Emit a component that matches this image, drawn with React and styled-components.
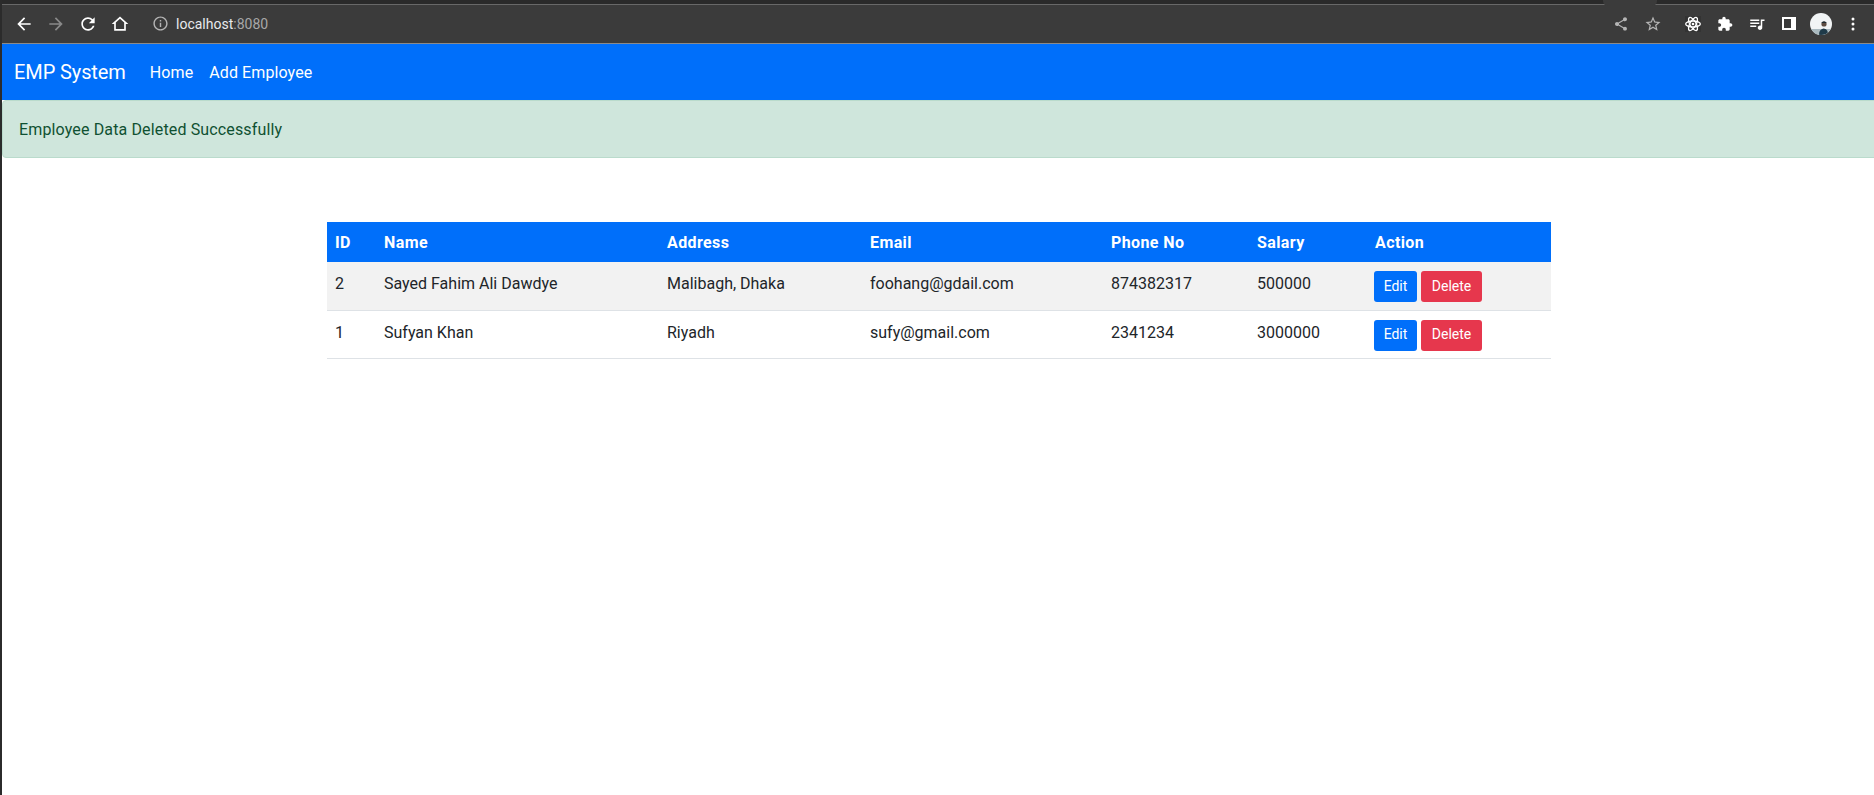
import React from 'react'
import styled, { createGlobalStyle } from 'styled-components'

const employees = [
  {
    id: 2,
    name: 'Sayed Fahim Ali Dawdye',
    address: 'Malibagh, Dhaka',
    email: 'foohang@gdail.com',
    phone: '874382317',
    salary: '500000'
  },
  {
    id: 1,
    name: 'Sufyan Khan',
    address: 'Riyadh',
    email: 'sufy@gmail.com',
    phone: '2341234',
    salary: '3000000'
  }
]

const columns = [
  { label: 'ID', width: 49 },
  { label: 'Name', width: 283 },
  { label: 'Address', width: 203 },
  { label: 'Email', width: 241 },
  { label: 'Phone No', width: 146 },
  { label: 'Salary', width: 118 },
  { label: 'Action', width: 184 }
]

const icons = {
  back: 'M20 11H7.83l5.59-5.59L12 4l-8 8 8 8 1.41-1.41L7.83 13H20v-2z',
  forward: 'M12 4l-1.41 1.41L16.17 11H4v2h12.17l-5.58 5.59L12 20l8-8z',
  reload:
    'M17.65 6.35C16.2 4.9 14.21 4 12 4c-4.42 0-7.99 3.58-7.99 8s3.57 8 7.99 8c3.73 0 6.84-2.55 7.73-6h-2.08c-.82 2.33-3.04 4-5.65 4-3.31 0-6-2.69-6-6s2.69-6 6-6c1.66 0 3.14.69 4.22 1.78L13 11h7V4l-2.35 2.35z',
  home: 'M12 5.69l5 4.5V18H7v-7.81l5-4.5M12 3L2 12h3v8h14v-8h3L12 3z',
  info: 'M11 7h2v2h-2zm0 4h2v6h-2zm1-9C6.48 2 2 6.48 2 12s4.48 10 10 10 10-4.48 10-10S17.52 2 12 2zm0 18c-4.41 0-8-3.59-8-8s3.59-8 8-8 8 3.59 8 8-3.59 8-8 8z',
  share:
    'M18 16.08c-.76 0-1.44.3-1.96.77L8.91 12.7c.05-.23.09-.46.09-.7s-.04-.47-.09-.7l7.05-4.11c.54.5 1.25.81 2.04.81 1.66 0 3-1.34 3-3s-1.34-3-3-3-3 1.34-3 3c0 .24.04.47.09.7L8.04 9.81C7.5 9.31 6.79 9 6 9c-1.66 0-3 1.34-3 3s1.34 3 3 3c.79 0 1.5-.31 2.04-.81l7.12 4.16c-.05.21-.08.43-.08.65 0 1.61 1.31 2.92 2.92 2.92s2.92-1.31 2.92-2.92-1.31-2.92-2.92-2.92z',
  star: 'M22 9.24l-7.19-.62L12 2 9.19 8.63 2 9.24l5.46 4.73L5.82 21 12 17.27 18.18 21l-1.63-7.03L22 9.24zM12 15.4l-3.76 2.27 1-4.28-3.32-2.88 4.38-.38L12 6.1l1.71 4.04 4.38.38-3.32 2.88 1 4.28L12 15.4z',
  extension:
    'M20.5 11H19V7c0-1.1-.9-2-2-2h-4V3.5C13 2.12 11.88 1 10.5 1S8 2.12 8 3.5V5H4c-1.1 0-1.99.9-1.99 2v3.8H3.5c1.49 0 2.7 1.21 2.7 2.7s-1.21 2.7-2.7 2.7H2V20c0 1.1.9 2 2 2h3.8v-1.5c0-1.49 1.21-2.7 2.7-2.7 1.49 0 2.7 1.21 2.7 2.7V22H17c1.1 0 2-.9 2-2v-4h1.5c1.38 0 2.5-1.12 2.5-2.5S21.88 11 20.5 11z',
  queue:
    'M15 6H3v2h12V6zm0 4H3v2h12v-2zM3 16h8v-2H3v2zM17 6v8.18c-.31-.11-.65-.18-1-.18-1.66 0-3 1.34-3 3s1.34 3 3 3 3-1.34 3-3V8h3V6h-5z'
}

const GlobalStyle = createGlobalStyle`
  html, body {
    margin: 0;
    background: #fff;
  }
  body {
    font-family: Roboto, 'Noto Sans', sans-serif;
    font-size: 16px;
    color: #212529;
    overflow: hidden;
  }
`

const Page = styled.div`
  width: 1874px;
  height: 795px;
  overflow: hidden;
  display: flex;
  flex-direction: column;
  background: #fff;
  border-left: 2px solid #2b2b2b;
  box-sizing: border-box;
`

const Chrome = styled.div`
  position: relative;
  height: 44px;
  flex: none;
  box-sizing: border-box;
  margin-left: -2px;
  background: #3b3b3b;
  border-top: 4px solid #2a2a2a;
  border-bottom: 1px solid #8a8a8a;
  box-shadow: inset 0 1px 0 #686868;
  display: flex;
  align-items: center;
  padding: 0 5px 0 8px;
  color: #fff;
`

const ActiveTab = styled.div`
  position: absolute;
  top: -4px;
  left: 1603px;
  width: 54px;
  height: 6px;
  background: #3b3b3b;
  border-radius: 0 0 5px 5px;
`

const Slot = styled.div`
  width: 32px;
  height: 32px;
  flex: none;
  display: flex;
  justify-content: center;
  align-items: center;
  color: ${p => p.$color || '#fff'};
`

const AtomSlot = styled(Slot)`
  margin-left: 8px;
`

const AtomBox = styled.div`
  width: 16px;
  height: 16px;
  display: flex;
  background: #333;
`

const InfoSlot = styled(Slot)`
  margin-left: 8px;
`

const AddressText = styled.div`
  flex: 1;
  font-size: 14px;
  color: #e8eaed;
`

const Port = styled.span`
  color: #a8a8a8;
`

const SidePanelIcon = styled.div`
  width: 14px;
  height: 13px;
  box-sizing: border-box;
  border: 2px solid #fff;
  border-right-width: 5px;
  background: #3b3b3b;
`

const Navbar = styled.nav`
  height: 56px;
  flex: none;
  background: #006ffa;
  display: flex;
  align-items: center;
  padding: 0 12px;
`

const Brand = styled.a`
  color: #fff;
  font-size: 20px;
  letter-spacing: -0.1px;
  margin-right: 16px;
  text-decoration: none;
`

const NavLink = styled.a`
  color: #fff;
  padding: 0 8px;
  letter-spacing: 0.1px;
  text-decoration: none;
`

const Alert = styled.div`
  height: 58px;
  flex: none;
  box-sizing: border-box;
  margin-right: -10px;
  background: #cfe6dc;
  border: 1px solid #badbcc;
  border-radius: 4px;
  color: #0f5132;
  padding: 0 16px;
  letter-spacing: 0.14px;
  display: flex;
  align-items: center;
`

const Container = styled.div`
  width: 1224px;
  margin: 64px 0 0 325px;
`

const Table = styled.table`
  width: 100%;
  table-layout: fixed;
  border-collapse: collapse;
`

const HeadCell = styled.th`
  background: #006ffa;
  color: #fff;
  font-weight: 700;
  letter-spacing: 0.4px;
  text-align: left;
  height: 40px;
  padding: 0 8px;
`

const Row = styled.tr`
  background: ${p => (p.$striped ? '#f2f2f2' : '#fff')};
  border-bottom: 1px solid #dee2e6;
`

const Cell = styled.td`
  height: 48px;
  box-sizing: border-box;
  padding: 10px 8px 0;
  line-height: 24px;
  vertical-align: top;
`

const Actions = styled.div`
  display: flex;
  gap: 4px;
  margin: -1px 0 0 -1px;
`

const ActionButton = styled.button`
  height: 31px;
  width: ${p => (p.$danger ? 61 : 43)}px;
  padding: 0 0 2px;
  border: none;
  border-radius: 3px;
  font-family: inherit;
  font-size: 14px;
  color: #fff;
  background: ${p => (p.$danger ? '#e6374d' : '#006ffa')};
`

const Icon = ({ d, size = 20 }) => (
  <svg width={size} height={size} viewBox="0 0 24 24" fill="currentColor">
    <path d={d} />
  </svg>
)

const AtomIcon = () => (
  <svg width="16" height="16" viewBox="0 0 24 24" fill="none" stroke="#fff" strokeWidth="2">
    <ellipse cx="12" cy="12" rx="11" ry="4.5" />
    <ellipse cx="12" cy="12" rx="11" ry="4.5" transform="rotate(60 12 12)" />
    <ellipse cx="12" cy="12" rx="11" ry="4.5" transform="rotate(120 12 12)" />
    <circle cx="12" cy="12" r="2" fill="#fff" stroke="none" />
  </svg>
)

const DotsIcon = () => (
  <svg width="16" height="16" viewBox="0 0 16 16" fill="#fff">
    <circle cx="8" cy="3" r="1.5" />
    <circle cx="8" cy="8" r="1.5" />
    <circle cx="8" cy="13" r="1.5" />
  </svg>
)

const AvatarIcon = () => (
  <svg width="22" height="22" viewBox="0 0 22 22">
    <defs>
      <clipPath id="avatar-clip">
        <circle cx="11" cy="11" r="11" />
      </clipPath>
    </defs>
    <g clipPath="url(#avatar-clip)">
      <rect width="22" height="22" fill="#f1f4f5" />
      <rect y="16" width="22" height="6" fill="#a9b9bf" />
      <path d="M9 22c0-4 1.500-6 4.500-6.500 3 .5 4.500 2 4.500 6.500z" fill="#1f3a49" />
      <circle cx="14" cy="11" r="2.600" fill="#5d4c42" />
      <path d="M11.500 10c0-2 5-2 5 0z" fill="#1d2a30" />
    </g>
  </svg>
)

export default function App() {
  return (
    <Page>
      <GlobalStyle />
      <Chrome>
        <ActiveTab />
        <Slot>
          <Icon d={icons.back} />
        </Slot>
        <Slot $color="#8a8a8a">
          <Icon d={icons.forward} />
        </Slot>
        <Slot>
          <Icon d={icons.reload} />
        </Slot>
        <Slot>
          <Icon d={icons.home} />
        </Slot>
        <InfoSlot $color="#b5b5b5">
          <Icon d={icons.info} size={17} />
        </InfoSlot>
        <AddressText>
          localhost<Port>:8080</Port>
        </AddressText>
        <Slot $color="#b5b5b5">
          <Icon d={icons.share} size={16} />
        </Slot>
        <Slot $color="#b5b5b5">
          <Icon d={icons.star} size={18} />
        </Slot>
        <AtomSlot>
          <AtomBox>
            <AtomIcon />
          </AtomBox>
        </AtomSlot>
        <Slot>
          <Icon d={icons.extension} size={16} />
        </Slot>
        <Slot>
          <Icon d={icons.queue} size={18} />
        </Slot>
        <Slot>
          <SidePanelIcon />
        </Slot>
        <Slot>
          <AvatarIcon />
        </Slot>
        <Slot>
          <DotsIcon />
        </Slot>
      </Chrome>
      <Navbar>
        <Brand>EMP System</Brand>
        <NavLink>Home</NavLink>
        <NavLink>Add Employee</NavLink>
      </Navbar>
      <Alert>Employee Data Deleted Successfully</Alert>
      <Container>
        <Table>
          <colgroup>
            {columns.map(col => (
              <col key={col.label} width={col.width} />
            ))}
          </colgroup>
          <thead>
            <tr>
              {columns.map(col => (
                <HeadCell key={col.label}>{col.label}</HeadCell>
              ))}
            </tr>
          </thead>
          <tbody>
            {employees.map((emp, i) => (
              <Row key={emp.id} $striped={i % 2 === 0}>
                <Cell>{emp.id}</Cell>
                <Cell>{emp.name}</Cell>
                <Cell>{emp.address}</Cell>
                <Cell>{emp.email}</Cell>
                <Cell>{emp.phone}</Cell>
                <Cell>{emp.salary}</Cell>
                <Cell>
                  <Actions>
                    <ActionButton>Edit</ActionButton>
                    <ActionButton $danger>Delete</ActionButton>
                  </Actions>
                </Cell>
              </Row>
            ))}
          </tbody>
        </Table>
      </Container>
    </Page>
  )
}
